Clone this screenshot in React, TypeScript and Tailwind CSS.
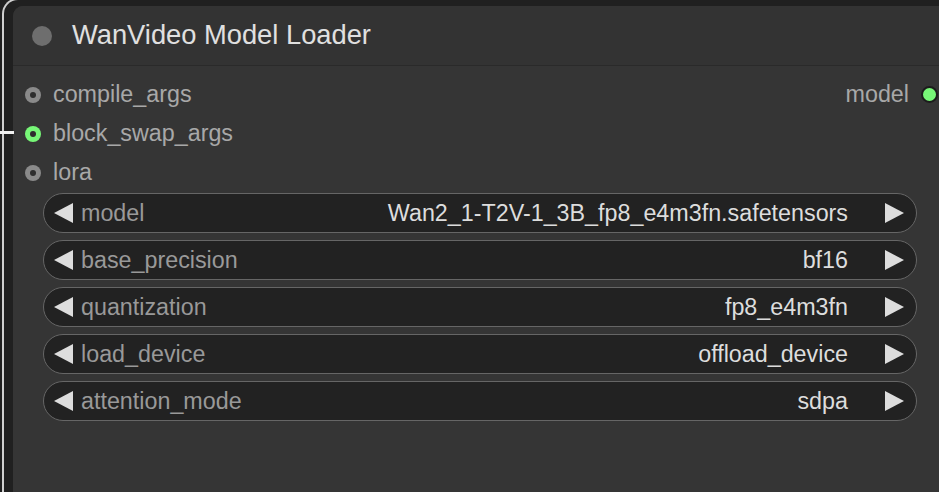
import React from 'react';

type Slot = {
    name: string;
    linked?: boolean;
};

type Widget = {
    label: string;
    value: string;
};

const inputs: Slot[] = [
    { name: 'compile_args' },
    { name: 'block_swap_args', linked: true },
    { name: 'lora' },
];

const widgets: Widget[] = [
    { label: 'model', value: 'Wan2_1-T2V-1_3B_fp8_e4m3fn.safetensors' },
    { label: 'base_precision', value: 'bf16' },
    { label: 'quantization', value: 'fp8_e4m3fn' },
    { label: 'load_device', value: 'offload_device' },
    { label: 'attention_mode', value: 'sdpa' },
];

function InputDot({ linked }: { linked?: boolean }) {
    return (
        <span
            className={`flex h-4 w-4 items-center justify-center rounded-full ${linked ? 'bg-[#77f777]' : 'bg-[#8a8a8a]'}`}
        >
            <span className="h-[6px] w-[6px] rounded-full bg-[#2e2e2e]" />
        </span>
    );
}

function Combo({ label, value }: Widget) {
    return (
        <div className="flex h-[40px] items-center rounded-full border-[1.5px] border-[#666] bg-[#222] pl-[10px] pr-[12px]">
            {/* left arrow */}
            <svg width="19" height="20" viewBox="0 0 19 20" className="shrink-0">
                <polygon points="0,10 19,0 19,20" fill="#dddddd" />
            </svg>
            <span className="ml-[8px] text-[#999]">{label}</span>
            <span className="ml-auto text-[#ddd]">{value}</span>
            <svg width="19" height="20" viewBox="0 0 19 20" className="ml-[37px] shrink-0">
                <polygon points="0,0 19,10 0,20" fill="#dddddd" />
            </svg>
        </div>
    );
}

export default function App() {
    return (
        <div
            className="relative h-[492px] w-[939px] overflow-hidden bg-[#202020] pl-[13px] pt-[6px]"
            style={{ fontFamily: '"Liberation Sans", Arial, sans-serif' }}
        >
            {/* selection outline of the group behind */}
            <div className="absolute left-[2px] top-[-2px] h-[520px] w-[60px] rounded-tl-[16px] border-l-2 border-t-2 border-[#d0d0d0]" />
            {/* incoming link */}
            <div className="absolute left-0 top-[131px] h-[3px] w-[14px] bg-[#f0f0f0]" />

            <div className="h-[520px] w-[934px] overflow-hidden rounded-tl-[10px] bg-[#353535]">
                {/* title */}
                <div className="flex h-[60px] items-center border-b border-[#2a2a2a] bg-[#333]">
                    <span className="ml-[19px] h-5 w-5 rounded-full bg-[#6e6e6e]" />
                    <span className="ml-[20px] text-[27.3px] text-[#e0e0e0]">WanVideo Model Loader</span>
                </div>

                {/* slots */}
                <div className="relative pt-[9px] text-[23.3px]">
                    {inputs.map((s) => (
                        <div key={s.name} className="flex h-[39px] items-center pl-[12px]">
                            <InputDot linked={s.linked} />
                            <span className="ml-[12px] text-[#a8a8a8]">{s.name}</span>
                        </div>
                    ))}
                    <div className="absolute right-0 top-[9px] flex h-[39px] items-center pr-[9px]">
                        <span className="text-[#a8a8a8]">model</span>
                        <span className="ml-[12px] h-[17px] w-[17px] rounded-full border-2 border-[#1c1c1c] bg-[#77f777]" />
                    </div>
                </div>

                {/* widgets */}
                <div className="mx-[30px] mt-[1px] flex flex-col gap-[7px] text-[23.3px]">
                    {widgets.map((w) => (
                        <Combo key={w.label} label={w.label} value={w.value} />
                    ))}
                </div>
            </div>
        </div>
    );
}
